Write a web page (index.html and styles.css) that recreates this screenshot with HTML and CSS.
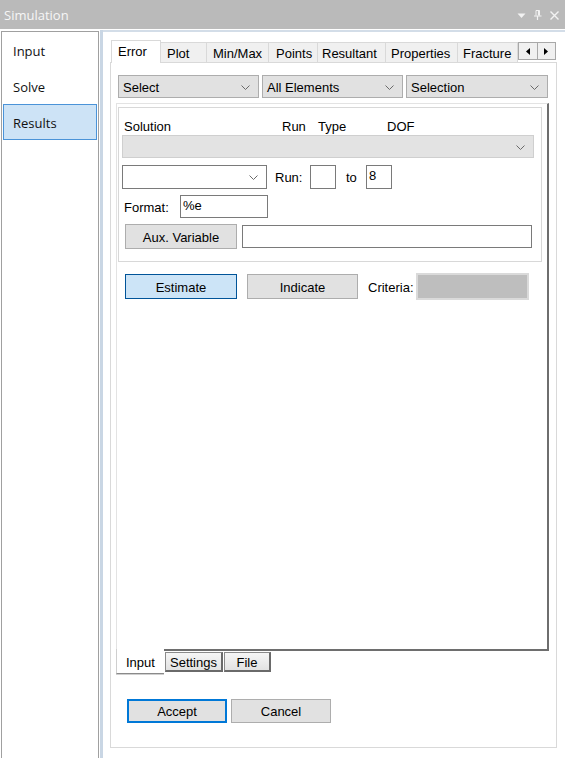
FILE: index.html
```html
<!DOCTYPE html>
<html>
<head>
<meta charset="utf-8">
<title>Simulation</title>
<link rel="stylesheet" href="styles.css">
</head>
<body>
<div class="window">
  <header class="titlebar">
    <span class="title">Simulation</span>
    <div class="title-icons">
      <svg class="ico-drop" width="9" height="6" viewBox="0 0 9 6"><path d="M0.5 0.5H8.5L4.5 5z" fill="#f2f2f2"/></svg>
      <svg class="ico-pin" width="8" height="10" viewBox="0 0 8 10"><path d="M2 0.5H5.5V5.5M2 0.5V5.5" stroke="#f2f2f2" stroke-width="1" fill="none"/><path d="M4.6 0.5V5.5" stroke="#f2f2f2" stroke-width="1.4"/><path d="M0 6H7.5M3.5 6V10" stroke="#f2f2f2" stroke-width="1.2" fill="none"/></svg>
      <svg class="ico-close" width="9" height="9" viewBox="0 0 9 9"><path d="M0.5 0.5L8.5 8.5M8.5 0.5L0.5 8.5" stroke="#f2f2f2" stroke-width="1.4"/></svg>
    </div>
  </header>
  <div class="main">
    <nav class="side">
      <div class="side-item">Input</div>
      <div class="side-item">Solve</div>
      <div class="side-item active">Results</div>
    </nav>
    <div class="divider"></div>
    <section class="content">
      <div class="tabctl">
        <div class="tabs">
          <div class="tab-spacer"></div>
          <div class="tab sel w-error">Error</div>
          <div class="tab w-plot">Plot</div>
          <div class="tab w-minmax">Min/Max</div>
          <div class="tab w-points">Points</div>
          <div class="tab w-result">Resultant</div>
          <div class="tab w-props">Properties</div>
          <div class="tab w-fract">Fracture</div>
          <div class="tab-scroll">
            <div class="scroll-box">
              <span class="sbtn"><svg width="4" height="7" viewBox="0 0 4 7"><path d="M4 0V7L0 3.5z" fill="#000"/></svg></span>
              <span class="sbtn sbtn-r"><svg width="4" height="7" viewBox="0 0 4 7"><path d="M0 0V7L4 3.5z" fill="#000"/></svg></span>
            </div>
          </div>
        </div>
        <div class="tabpanel">
          <div class="combo-row">
            <div class="combo c-select"><span>Select</span><svg class="chev" width="9" height="5" viewBox="0 0 9 5"><polyline points="0.5,0.5 4.5,4.5 8.5,0.5" fill="none" stroke="#6a6a6a" stroke-width="1"/></svg></div>
            <div class="combo c-all"><span>All Elements</span><svg class="chev" width="9" height="5" viewBox="0 0 9 5"><polyline points="0.5,0.5 4.5,4.5 8.5,0.5" fill="none" stroke="#6a6a6a" stroke-width="1"/></svg></div>
            <div class="combo c-sel"><span>Selection</span><svg class="chev" width="9" height="5" viewBox="0 0 9 5"><polyline points="0.5,0.5 4.5,4.5 8.5,0.5" fill="none" stroke="#6a6a6a" stroke-width="1"/></svg></div>
          </div>
          <div class="inner">
            <div class="group">
              <div class="hdr-row">
                <span class="h-sol">Solution</span>
                <span class="h-run">Run</span>
                <span class="h-type">Type</span>
                <span class="h-dof">DOF</span>
              </div>
              <div class="combo disabled c-wide"><span></span><svg class="chev" width="9" height="5" viewBox="0 0 9 5"><polyline points="0.5,0.5 4.5,4.5 8.5,0.5" fill="none" stroke="#6a6a6a" stroke-width="1"/></svg></div>
              <div class="row row2">
                <div class="combo white c-small"><span></span><svg class="chev" width="9" height="5" viewBox="0 0 9 5"><polyline points="0.5,0.5 4.5,4.5 8.5,0.5" fill="none" stroke="#6a6a6a" stroke-width="1"/></svg></div>
                <span class="lbl l-run">Run:</span>
                <div class="tbox b-run"></div>
                <span class="lbl l-to">to</span>
                <div class="tbox b-to">8</div>
              </div>
              <div class="row row3">
                <span class="lbl l-fmt">Format:</span>
                <div class="tbox b-fmt">%e</div>
              </div>
              <div class="row row4">
                <div class="btn b-aux">Aux. Variable</div>
                <div class="tbox b-auxv"></div>
              </div>
            </div>
            <div class="est-row">
              <div class="btn primary b-est">Estimate</div>
              <div class="btn b-ind">Indicate</div>
              <span class="lbl l-crit">Criteria:</span>
              <div class="crit-box"></div>
            </div>
          </div>
          <div class="btabs">
            <div class="btab-input">Input</div>
            <div class="btab b-settings">Settings</div>
            <div class="btab b-file">File</div>
          </div>
          <div class="actions">
            <div class="btn accept">Accept</div>
            <div class="btn cancel">Cancel</div>
          </div>
        </div>
      </div>
    </section>
  </div>
</div>
</body>
</html>
```
FILE: styles.css
```css
* { box-sizing: border-box; margin: 0; padding: 0; }
html, body { width: 565px; height: 758px; overflow: hidden; background: #fff; }
body { font-family: "Liberation Sans", Arial, sans-serif; font-size: 13px; color: #000; }

.window { display: flex; flex-direction: column; height: 758px; }

/* title bar */
.titlebar { height: 29px; flex: none; background: #bababa; display: flex; align-items: center; justify-content: space-between; padding: 1px 6px 0 4px; }
.title { font-family: "Open Sans", sans-serif; font-size: 13px; color: #f6f6f6; line-height: 28px; }
.title-icons { display: flex; align-items: center; }
.ico-drop { margin-top: 1px; }
.ico-pin { margin-left: 8px; }
.ico-close { margin-left: 8px; }

/* main area */
.main { flex: 1; display: flex; padding-top: 1px; min-height: 0; }
.side { width: 98px; flex: none; margin: 1px 0 0 1px; border: 1px solid #a0a0a0; border-bottom: none; font-family: "Open Sans", sans-serif; font-size: 13px; color: #111; }
.side-item { height: 36px; margin: 0 1px; padding: 1px 0 0 9px; line-height: 34px; border: 1px solid transparent; }
.side-item.active { background: #cde3f6; border-color: #4a93d8; }
.divider { width: 3px; flex: none; margin-left: 1px; background: #c9d6e4; }
.content { flex: 1; border-top: 2px solid #d3dde8; padding: 8px 0 0 7px; }

/* tab control */
.tabctl { width: 447px; }
.tabs { display: flex; align-items: flex-end; height: 23px; }
.tab-spacer { width: 1px; height: 1px; border-bottom: 1px solid #d9d9d9; }
.tab { height: 21px; padding: 3px 0 0 6px; line-height: 16px; background: #f0f0f0; border-top: 1px solid #d9d9d9; border-right: 1px solid #d9d9d9; border-bottom: 1px solid #d9d9d9; white-space: nowrap; }
.tab.sel { height: 23px; background: #fff; border-left: 1px solid #d9d9d9; border-bottom: none; padding-left: 6px; }
.w-error { width: 50px; }
.w-plot { width: 46px; }
.w-minmax { width: 62px; }
.w-points { width: 49px; padding-left: 7px; }
.w-result { width: 68px; padding-left: 4px; }
.w-props { width: 72px; padding-left: 5px; }
.w-fract { width: 60px; padding-left: 5px; }
.tab-scroll { width: 39px; height: 23px; border-bottom: 1px solid #d9d9d9; padding-top: 2px; }
.scroll-box { width: 38px; height: 18px; display: flex; border: 1px solid #a8a8a8; background: #f0f0f0; }
.sbtn { flex: 1; display: flex; align-items: center; justify-content: center; }
.sbtn-r { border-left: 1px solid #a8a8a8; }

.tabpanel { height: 685px; border: 1px solid #d9d9d9; border-top: none; }
.combo-row { display: flex; gap: 3px; padding: 12px 0 0 7px; }
.combo { height: 23px; display: flex; align-items: center; justify-content: space-between; padding: 1px 8px 0 4px; background: #e1e1e1; border: 1px solid #adadad; }
.chev { flex: none; }
.c-select { width: 141px; }
.c-all { width: 141px; }
.c-sel { width: 142px; }

.inner { width: 433px; height: 548px; margin: 5px 0 0 5px; border-left: 1px solid #e3e3e3; border-top: 1px solid #e3e3e3; border-right: 2px solid #6e6e6e; border-bottom: 2px solid #6e6e6e; }
.group { width: 424px; height: 155px; margin: 3px 0 0 1px; border: 1px solid #d8d8d8; }
.hdr-row { display: flex; margin-top: 10px; height: 16px; line-height: 17px; padding-left: 5px; }
.h-sol { width: 158px; }
.h-run { width: 36px; }
.h-type { width: 69px; }
.combo.disabled { background: #e3e3e3; border-color: #cfcfcf; }
.c-wide { width: 412px; margin: 1px 0 0 3px; }
.row { display: flex; align-items: center; }
.row2 { height: 24px; margin-top: 7px; }
.combo.white { background: #fff; border-color: #7a7a7a; height: 24px; }
.c-small { width: 145px; margin-left: 3px; }
.lbl { white-space: nowrap; padding-top: 1px; }
.l-run { width: 35px; margin-left: 8px; }
.tbox { height: 24px; background: #fff; border: 1px solid #7a7a7a; padding: 0 2px; line-height: 20px; }
.b-run { width: 26px; }
.l-to { width: 20px; margin-left: 10px; }
.b-to { width: 26px; }
.row3 { height: 23px; margin-top: 6px; }
.l-fmt { width: 56px; margin-left: 5px; }
.b-fmt { width: 88px; height: 23px; }
.row4 { height: 25px; margin-top: 6px; }
.btn { display: flex; align-items: center; justify-content: center; background: #e1e1e1; border: 1px solid #adadad; white-space: nowrap; padding-top: 1px; }
.b-aux { width: 112px; height: 25px; margin-left: 6px; }
.b-auxv { width: 290px; height: 23px; margin-left: 5px; }

.est-row { display: flex; align-items: center; height: 27px; margin-top: 11px; padding-left: 8px; }
.b-est, .b-ind { height: 25px; }
.b-est { width: 112px; }
.btn.primary { background: #cce4f7; border-color: #005499; }
.b-ind { width: 111px; margin-left: 10px; }
.l-crit { width: 48px; margin-left: 10px; }
.crit-box { width: 113px; height: 27px; background: #bebebe; border: 2px solid #dadada; }

.btabs { display: flex; align-items: flex-start; margin-left: 5px; height: 23px; }
.btab-input { width: 48px; height: 25px; margin-top: -2px; padding: 6px 0 0 9px; line-height: 16px; background: #fff; border-left: 1px solid #cfcfcf; border-bottom: 1px solid #8a8a8a; box-shadow: 0 1px 0 #cfcfcf; }
.btab { height: 20px; margin-top: 1px; margin-left: 1px; text-align: center; line-height: 19px; background: linear-gradient(#f6f6f6, #e2e2e2); border: 1px solid #8a8a8a; border-right: 2px solid #6a6a6a; border-bottom: 2px solid #6a6a6a; }
.b-settings { width: 58px; }
.b-file { width: 47px; }

.actions { display: flex; margin: 25px 0 0 16px; }
.accept, .cancel { width: 100px; height: 24px; }
.accept { border: 2px solid #0078d7; }
.cancel { margin-left: 4px; }
```
